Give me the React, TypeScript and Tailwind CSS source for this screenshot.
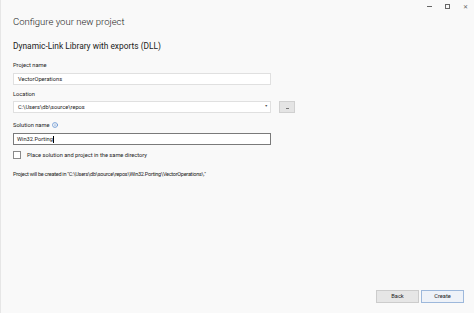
import { Info } from 'lucide-react';

const font = { fontFamily: 'Roboto, "Open Sans", sans-serif' };

function Label({ children }: { children: React.ReactNode }) {
  return <div className="h-[8px] text-[5.7px] leading-[8px] text-[#1b1b1b]">{children}</div>;
}

export default function App() {
  return (
    <div
      className="relative w-[474px] h-[313px] bg-[#f9f9f9] text-[#1b1b1b] overflow-hidden border-l border-[#e6e6e6] flex flex-col"
      style={font}
    >
      {/* window controls */}
      <div className="absolute top-0 right-0 flex items-center h-[13px]">
        <div className="w-[18px] flex justify-center">
          <div className="w-[5px] h-px bg-[#666]" />
        </div>
        <div className="w-[18px] flex justify-center">
          <div className="w-[5px] h-[5px] border border-[#666]" />
        </div>
        <div className="w-[18px] flex justify-center text-[6px] leading-none text-[#666]">✕</div>
      </div>

      <div className="pl-[12px] pt-[15px] flex-1 flex flex-col">
        <h1 className="h-[14px] text-[9.5px] leading-[14px] font-light">Configure your new project</h1>
        <h2 className="mt-[11px] h-[12px] text-[8.4px] leading-[12px]">Dynamic-Link Library with exports (DLL)</h2>

        <div className="mt-[9px]">
          <Label>Project name</Label>
          <div className="mt-[4px] w-[258px] h-[12px] bg-white border border-[#e0e0e0] flex items-center px-[4px] text-[5.7px]">
            VectorOperations
          </div>
        </div>

        <div className="mt-[5px]">
          <Label>Location</Label>
          <div className="mt-[3px] flex items-center gap-[8px]">
            <div className="w-[258px] h-[12px] bg-white border border-[#e0e0e0] flex items-center justify-between pl-[4px] pr-[2px] text-[5.7px]">
              <span>C:\Users\db\source\repos</span>
              <span className="text-[3.5px] text-[#555]">▼</span>
            </div>
            <div className="w-[16px] h-[12px] bg-[#e4e4e4] border border-[#d0d0d0] flex items-end justify-center pb-[3px]">
              <div className="w-[3px] h-px bg-[#777]" />
            </div>
          </div>
        </div>

        <div className="mt-[8px]">
          <div className="flex items-center gap-[3px]">
            <Label>Solution name</Label>
            <Info size={6} strokeWidth={2.2} className="text-[#2f6fc4]" />
          </div>
          <div className="mt-[4px] w-[258px] h-[12px] bg-white border border-[#7a7a7a] flex items-center px-[3px] text-[5.7px]">
            Win32.Porting<span className="w-px h-[7px] bg-black" />
          </div>
        </div>

        <div className="mt-[6px] h-[8px] flex items-center gap-[6px]">
          <div className="w-[8px] h-[8px] border border-[#8a8a8a] bg-white" />
          <span className="text-[5.7px]">Place solution and project in the same directory</span>
        </div>

        <div className="mt-[11px] h-[8px] leading-[8px] text-[5.5px] tracking-[-0.25px]">
          Project will be created in "C:\Users\db\source\repos\Win32.Porting\VectorOperations\."
        </div>

        <div className="mt-auto mb-[10px] mr-[10px] flex justify-end gap-[2px]">
          <button className="w-[43px] h-[13px] bg-[#e6e6e6] border border-[#cccccc] text-[5.7px] leading-none">Back</button>
          <button className="w-[43px] h-[13px] bg-[#eef2f8] border border-[#9db8db] text-[5.7px] leading-none">Create</button>
        </div>
      </div>
    </div>
  );
}
